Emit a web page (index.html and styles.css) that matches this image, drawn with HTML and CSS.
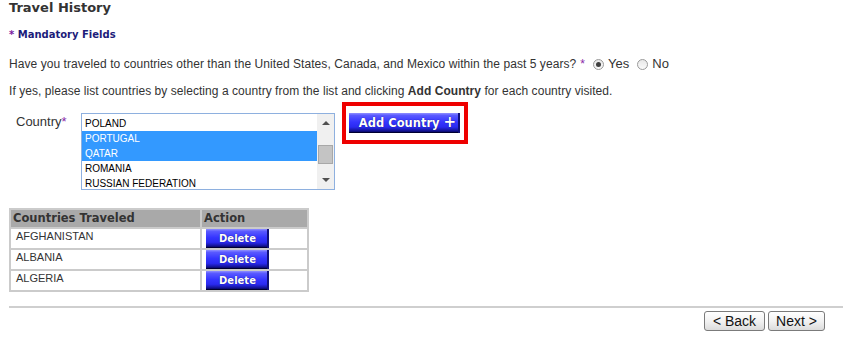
FILE: index.html
```html
<!DOCTYPE html>
<html>
<head>
<meta charset="utf-8">
<link rel="stylesheet" href="styles.css">
</head>
<body>
<div class="page">
  <h1 class="title">Travel History</h1>
  <div class="mandatory"><span class="star">*</span> Mandatory Fields</div>
  <div class="question">
    Have you traveled to countries other than the United States, Canada, and Mexico within the past 5 years? <span class="req">*</span>
    <span class="radio checked"></span><span class="rlabel">Yes</span>
    <span class="radio"></span><span class="rlabel">No</span>
  </div>
  <div class="hint">If yes, please list countries by selecting a country from the list and clicking <b>Add Country</b> for each country visited.</div>
  <div class="country-row">
    <div class="clabel">Country<span class="req">*</span></div>
    <div class="listbox">
      <div class="items">
        <div class="item">POLAND</div>
        <div class="item sel">PORTUGAL</div>
        <div class="item sel">QATAR</div>
        <div class="item">ROMANIA</div>
        <div class="item">RUSSIAN FEDERATION</div>
      </div>
      <div class="scroll">
        <div class="arrow up"></div>
        <div class="track"><div class="thumb"></div></div>
        <div class="arrow down"></div>
      </div>
    </div>
    <div class="highlight">
      <div class="bluebtn add">Add Country <span class="plus">+</span></div>
    </div>
  </div>
  <table class="countries">
    <tr><th class="c1">Countries Traveled</th><th>Action</th></tr>
    <tr><td class="c1">AFGHANISTAN</td><td><div class="bluebtn del">Delete</div></td></tr>
    <tr><td class="c1">ALBANIA</td><td><div class="bluebtn del">Delete</div></td></tr>
    <tr><td class="c1">ALGERIA</td><td><div class="bluebtn del">Delete</div></td></tr>
  </table>
  <div class="rule"></div>
  <div class="nav">
    <div class="navbtn back">&lt; Back</div>
    <div class="navbtn next">Next &gt;</div>
  </div>
</div>
</body>
</html>
```
FILE: styles.css
```css
html, body { margin: 0; padding: 0; background: #fff; }
body { font-family: "Liberation Sans", Arial, sans-serif; color: #333; }
.page { padding-left: 9px; }
.title { margin: 0; font: bold 13px/16px "DejaVu Sans", Verdana, sans-serif; color: #333; }
.mandatory { margin-top: 12px; font: bold 10px/14px "DejaVu Sans", Verdana, sans-serif; color: #1c1c7a; }
.star { color: #7a1aa0; }
.req { color: #8a2aa8; }
.question { margin-top: 14px; font-size: 12px; line-height: 16px; display: flex; align-items: center; white-space: nowrap; letter-spacing: 0.06px; }
.question .req { margin-left: 4px; margin-right: 8px; }
.radio { display: inline-block; width: 11px; height: 11px; border: 1px solid #9a9a9a; border-radius: 50%; background: linear-gradient(#e8e8e8, #fafafa); box-sizing: border-box; position: relative; margin-right: 4px; }
.radio.checked::after { content: ""; position: absolute; left: 2px; top: 2px; width: 5px; height: 5px; border-radius: 50%; background: #404040; }
.rlabel { margin-right: 8px; font-size: 13px; }
.hint { margin-top: 11px; font-size: 12px; line-height: 16px; letter-spacing: 0.05px; }
.hint b { color: #333; }
.country-row { margin-top: 3px; display: flex; align-items: flex-start; }
.clabel { width: 65px; padding-left: 7px; margin-top: 12px; font-size: 13px; line-height: 16px; }
.listbox { margin-top: 11px; width: 254px; height: 77px; box-sizing: border-box; border: 1px solid #8eb0df; display: flex; overflow: hidden; background: #fff; }
.items { flex: 1; padding-top: 2px; overflow: hidden; }
.item { height: 15px; line-height: 15px; font-size: 10px; padding-left: 3px; color: #000; white-space: nowrap; }
.item.sel { background: #3399ff; color: #fff; }
.scroll { width: 17px; background: #f0f0f0; display: flex; flex-direction: column; }
.arrow { height: 17px; position: relative; }
.arrow::after { content: ""; position: absolute; left: 5px; border-left: 4px solid transparent; border-right: 4px solid transparent; }
.arrow.up::after { top: 7px; border-bottom: 4px solid #505050; }
.arrow.down::after { top: 6px; border-top: 4px solid #505050; }
.track { flex: 1; position: relative; }
.thumb { position: absolute; left: 1px; top: 14px; width: 13px; height: 17px; background: #c4c4c4; border: 1px solid #a8a8a8; }
.highlight { margin-left: 7px; border: 4px solid #ee0000; padding: 7px 4px 7px 3px; }
.bluebtn { box-sizing: border-box; color: #fff; font-family: "DejaVu Sans", Verdana, sans-serif; font-weight: bold; text-align: center; background: linear-gradient(#9090ff 0, #5a5aff 12%, #3535ff 45%, #2a2af0 70%, #1818a8 85%, #00004a 100%); box-shadow: inset -2px 0 0 #10107a, inset 0 -1px 0 #000030; text-shadow: 0 0 1px #000060; }
.add { width: 111px; height: 20px; line-height: 19px; font-size: 11.5px; padding-left: 6px; }
.plus { font-size: 15px; font-weight: 900; }
.countries { margin-top: 18px; border-collapse: collapse; width: 300px; font-size: 11px; }
.countries th, .countries td { border: 2px solid #cbcbcb; padding: 0; text-align: left; vertical-align: top; }
.countries th { background: #a9a9a9; height: 17px; font: bold 11.5px/17px "DejaVu Sans", Verdana, sans-serif; color: #333; padding-left: 2px; }
.countries td { height: 19px; }
.countries td.c1 { padding: 1px 0 0 5px; height: 18px; }
.countries .c1 { width: 184px; }
.countries th.c1 { width: 187px; }
.del { width: 63px; height: 19px; line-height: 19px; font-size: 10px; margin-left: 4px; }
.rule { margin-top: 14px; height: 2px; background: #cfcfcf; }
.nav { display: flex; justify-content: flex-end; gap: 3px; margin-top: 3px; padding-right: 18px; }
.navbtn { height: 20px; box-sizing: border-box; border: 1px solid #7b7b7b; border-radius: 3px; background: linear-gradient(#ffffff, #f2f2f2 50%, #dcdcdc); color: #111; font-size: 14px; line-height: 18px; text-align: center; }
.back { width: 61px; }
.next { width: 57px; }
```
